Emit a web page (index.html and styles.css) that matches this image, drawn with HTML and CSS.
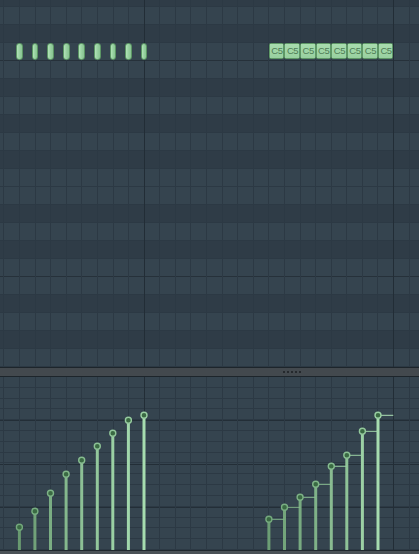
FILE: index.html
```html
<!DOCTYPE html>
<html>
<head>
<meta charset="utf-8">
<link rel="stylesheet" href="styles.css">
</head>
<body>
<div class="app">
  <div class="roll">
    <div class="pill" style="left:16.1px"></div>
    <div class="pill" style="left:31.6px"></div>
    <div class="pill" style="left:47.2px"></div>
    <div class="pill" style="left:62.8px"></div>
    <div class="pill" style="left:78.4px"></div>
    <div class="pill" style="left:94.0px"></div>
    <div class="pill" style="left:109.5px"></div>
    <div class="pill" style="left:125.1px"></div>
    <div class="pill" style="left:140.7px"></div>

    <div class="note" style="left:268.8px">C5</div>
    <div class="note" style="left:284.4px">C5</div>
    <div class="note" style="left:300.0px">C5</div>
    <div class="note" style="left:315.6px">C5</div>
    <div class="note" style="left:331.2px">C5</div>
    <div class="note" style="left:346.7px">C5</div>
    <div class="note" style="left:362.3px">C5</div>
    <div class="note" style="left:377.9px">C5</div>
  </div>
  <div class="splitter">
    <div class="grip"><i></i><i></i><i></i><i></i><i></i></div>
  </div>
  <div class="events">
    <svg class="vel" width="419" height="173" viewBox="0 0 419 173">
      <g class="stems">
        <line x1="19.4" y1="150.3" x2="19.4" y2="173" stroke="#689970"/>
        <line x1="34.9" y1="134.3" x2="34.9" y2="173" stroke="#71a279"/>
        <line x1="50.5" y1="116.3" x2="50.5" y2="173" stroke="#7aad83"/>
        <line x1="66.1" y1="97.3" x2="66.1" y2="173" stroke="#84b88d"/>
        <line x1="81.7" y1="83.3" x2="81.7" y2="173" stroke="#8cc095"/>
        <line x1="97.3" y1="69.3" x2="97.3" y2="173" stroke="#93c89c"/>
        <line x1="112.8" y1="56.3" x2="112.8" y2="173" stroke="#9ad0a3"/>
        <line x1="128.4" y1="43.3" x2="128.4" y2="173" stroke="#a1d7ab"/>
        <line x1="144.0" y1="38.3" x2="144.0" y2="173" stroke="#a6dcaf"/>

        <line x1="268.9" y1="142.3" x2="268.9" y2="173" stroke="#6c9e75"/>
        <line x1="284.5" y1="130.3" x2="284.5" y2="173" stroke="#73a57b"/>
        <line x1="300.1" y1="120.3" x2="300.1" y2="173" stroke="#78aa81"/>
        <line x1="315.7" y1="107.3" x2="315.7" y2="173" stroke="#7fb288"/>
        <line x1="331.3" y1="89.3" x2="331.3" y2="173" stroke="#89bc91"/>
        <line x1="346.8" y1="78.3" x2="346.8" y2="173" stroke="#8ec397"/>
        <line x1="362.4" y1="54.3" x2="362.4" y2="173" stroke="#9bd1a4"/>
        <line x1="378.0" y1="38.3" x2="378.0" y2="173" stroke="#a6dcaf"/>
      </g>
      <g class="lens">
        <line x1="268.9" y1="142.3" x2="284.5" y2="142.3" stroke="#7fb288"/>
        <line x1="284.5" y1="130.3" x2="300.1" y2="130.3" stroke="#85b88e"/>
        <line x1="300.1" y1="120.3" x2="315.7" y2="120.3" stroke="#89bc91"/>
        <line x1="315.7" y1="107.3" x2="331.3" y2="107.3" stroke="#8ec397"/>
        <line x1="331.3" y1="89.3" x2="346.8" y2="89.3" stroke="#96cb9f"/>
        <line x1="346.8" y1="78.3" x2="362.4" y2="78.3" stroke="#9ad0a3"/>
        <line x1="362.4" y1="54.3" x2="378.0" y2="54.3" stroke="#a3d9ac"/>
        <line x1="378.0" y1="38.3" x2="393.3" y2="38.3" stroke="#aee2b6"/>
      </g>
      <g class="dots">
        <circle cx="19.4" cy="150.3" r="3" stroke="#73a87c"/>
        <circle cx="34.9" cy="134.3" r="3" stroke="#78ad81"/>
        <circle cx="50.5" cy="116.3" r="3" stroke="#7db286"/>
        <circle cx="66.1" cy="97.3" r="3" stroke="#82b78b"/>
        <circle cx="81.7" cy="83.3" r="3" stroke="#87bc90"/>
        <circle cx="97.3" cy="69.3" r="3" stroke="#8cc195"/>
        <circle cx="112.8" cy="56.3" r="3" stroke="#91c69a"/>
        <circle cx="128.4" cy="43.3" r="3" stroke="#96cb9f"/>
        <circle cx="144.0" cy="38.3" r="3" stroke="#9acfa3"/>

        <circle cx="268.9" cy="142.3" r="3" stroke="#75aa7e"/>
        <circle cx="284.5" cy="130.3" r="3" stroke="#79ae82"/>
        <circle cx="300.1" cy="120.3" r="3" stroke="#7db286"/>
        <circle cx="315.7" cy="107.3" r="3" stroke="#81b68a"/>
        <circle cx="331.3" cy="89.3" r="3" stroke="#87bc90"/>
        <circle cx="346.8" cy="78.3" r="3" stroke="#8bc094"/>
        <circle cx="362.4" cy="54.3" r="3" stroke="#93c89c"/>
        <circle cx="378.0" cy="38.3" r="3" stroke="#9acfa3"/>
      </g>
    </svg>
  </div>
  <div class="footer"></div>
</div>
</body>
</html>
```

FILE: styles.css
```css
html, body {
  margin: 0;
  padding: 0;
  background: #35444f;
}

.app {
  width: 419px;
  height: 554px;
  display: flex;
  flex-direction: column;
  overflow: hidden;
  font-family: "Liberation Sans", Arial, sans-serif;
}

.roll {
  position: relative;
  height: 367px;
  flex: none;
  background:
    repeating-linear-gradient(to right,
      transparent 0 143.5px, #222d36 143.5px 144.8px, transparent 144.8px 249.3px),
    repeating-linear-gradient(to right,
      transparent 0 3.5px, #2c3944 3.5px 4.5px, transparent 4.5px 15.58px),
    repeating-linear-gradient(to bottom,
      transparent 0 60.2px, #26313a 60.2px 61.3px, transparent 61.3px 216px),
    repeating-linear-gradient(to bottom,
      transparent 0 6.2px, #2c3944 6.2px 7.2px, transparent 7.2px 18px),
    repeating-linear-gradient(to bottom,
      #2f3c47 0 6.67px,
      #35444f 6.67px 24.67px,
      #2f3c47 24.67px 42.67px,
      #35444f 42.67px 78.67px,
      #2f3c47 78.67px 96.67px,
      #35444f 96.67px 114.67px,
      #2f3c47 114.67px 132.67px,
      #35444f 132.67px 150.67px,
      #2f3c47 150.67px 168.67px,
      #35444f 168.67px 204.67px,
      #2f3c47 204.67px 216px);
}

.pill {
  position: absolute;
  top: 43.3px;
  width: 6.8px;
  height: 16.6px;
  box-sizing: border-box;
  border: 1px solid #5b9564;
  border-radius: 3px;
  background: linear-gradient(to right, #b1e3b8, #96d09f 55%, #89c493);
}

.note {
  position: absolute;
  top: 43.3px;
  width: 15.6px;
  height: 16px;
  box-sizing: border-box;
  border: 1px solid #5e9866;
  border-radius: 1.5px;
  background: linear-gradient(to bottom, #a8dcae, #98d0a0);
  color: #4f7d56;
  font-size: 9.5px;
  line-height: 14px;
  letter-spacing: -0.4px;
  padding-left: 1.5px;
  white-space: nowrap;
  overflow: hidden;
}

.splitter {
  flex: none;
  height: 10px;
  box-sizing: border-box;
  border-top: 1px solid #1d252b;
  border-bottom: 1px solid #1d252b;
  background: #43494e;
  display: flex;
  justify-content: flex-end;
  align-items: center;
  padding-right: 118px;
}

.grip {
  display: flex;
  gap: 2px;
}

.grip i {
  display: block;
  width: 2px;
  height: 2px;
  background: #25292d;
}

.events {
  flex: none;
  height: 173px;
  background:
    repeating-linear-gradient(to right,
      transparent 0 143.5px, #222d36 143.5px 144.8px, transparent 144.8px 249.3px),
    repeating-linear-gradient(to right,
      transparent 0 3.5px, #2c3944 3.5px 4.5px, transparent 4.5px 15.58px),
    repeating-linear-gradient(to bottom,
      transparent 0 42.75px, #232e37 42.75px 43.8px),
    repeating-linear-gradient(to bottom,
      transparent 0 9.8px, #2c3944 9.8px 10.81px),
    #35444f;
}

.vel {
  display: block;
}

.stems line {
  stroke-width: 3;
}

.lens line {
  stroke-width: 1;
}

.dots circle {
  fill: #3a6a43;
  stroke-width: 1.4;
}

.footer {
  flex: none;
  height: 4px;
  border-top: 1px solid #1f272d;
  background: #4a5156;
}
```
